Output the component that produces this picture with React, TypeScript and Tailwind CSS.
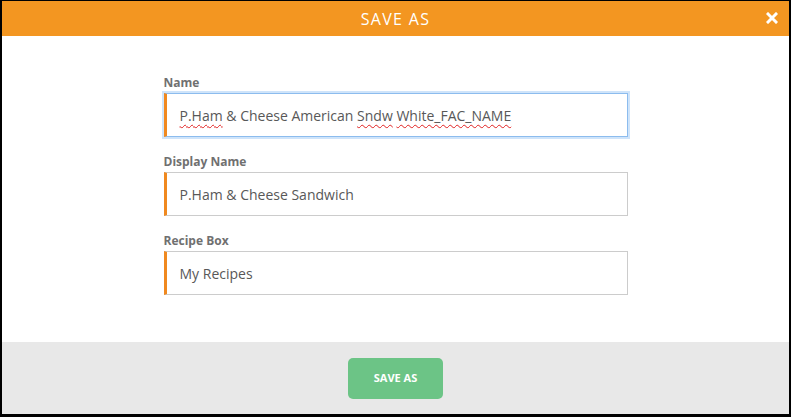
import React from 'react';

const font = { fontFamily: '"Open Sans", "Liberation Sans", sans-serif' };

function Field({
  label,
  children,
  focused = false,
}: {
  label: string;
  children: React.ReactNode;
  focused?: boolean;
}) {
  return (
    <div className="mb-[18px]">
      <div className="h-[14px] leading-[14px] mb-[3px] text-[12px] font-bold text-[#707070]">{label}</div>
      <div
        className={
          focused
            ? 'h-[44px] flex items-center pl-[13px] border border-[#8cbcee] border-l-[3px] border-l-[#f0891f] shadow-[0_0_0_2px_#cfe4fa] text-[14px] text-[#585858]'
            : 'h-[44px] flex items-center pl-[13px] border border-[#cccccc] border-l-[3px] border-l-[#f0891f] text-[14px] text-[#585858]'
        }
      >
        {children}
      </div>
    </div>
  );
}

export default function App() {
  const squiggle = 'underline decoration-wavy decoration-[#e02020] decoration-1 underline-offset-[3px]';
  return (
    <div className="w-[791px] h-[417px] border-black border-t border-x-2 border-b-[3px] flex flex-col bg-white" style={font}>
      <div className="h-[35px] shrink-0 bg-[#f39621] relative flex items-center justify-center">
        <span className="text-white text-[16px] tracking-[1.3px] leading-none">SAVE AS</span>
        <button className="absolute right-[11px] top-[11px] text-white">
          <svg width="12" height="12" viewBox="0 0 12 12">
            <path d="M2 2 L10 10 M10 2 L2 10" stroke="white" strokeWidth="3" strokeLinecap="square" />
          </svg>
        </button>
      </div>
      <div className="flex-1 flex justify-center pt-[40px]">
        <div className="w-[464px]">
          <Field label="Name" focused>
            <span>
              <span className={squiggle}>P.Ham</span> &amp; Cheese American{' '}
              <span className={squiggle}>Sndw</span> <span className={squiggle}>White_FAC_NAME</span>
            </span>
          </Field>
          <Field label="Display Name">P.Ham &amp; Cheese Sandwich</Field>
          <Field label="Recipe Box">My Recipes</Field>
        </div>
      </div>
      <div className="h-[72px] shrink-0 bg-[#e8e8e8] flex justify-center pt-[16px]">
        <button className="w-[95px] h-[41px] rounded-[5px] bg-[#6cc486] text-white text-[11px] font-bold">
          SAVE AS
        </button>
      </div>
    </div>
  );
}
